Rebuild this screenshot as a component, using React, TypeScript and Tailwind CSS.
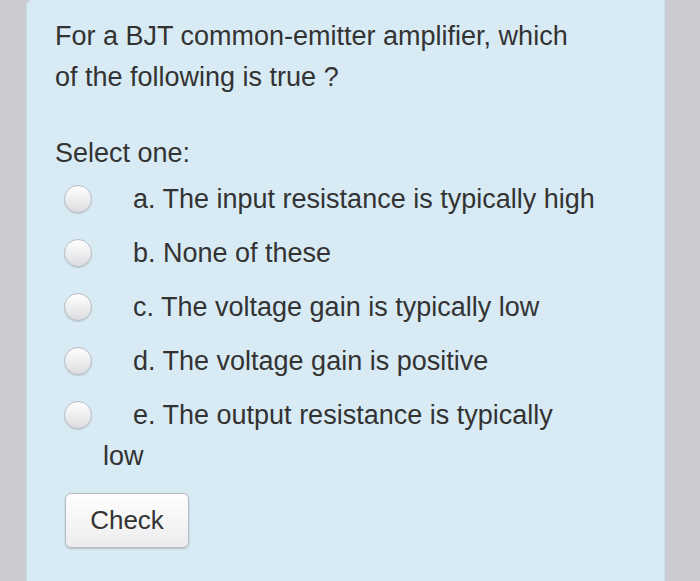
import React from 'react'

const options = [
  'a. The input resistance is typically high',
  'b. None of these',
  'c. The voltage gain is typically low',
  'd. The voltage gain is positive',
  'e. The output resistance is typically low',
]

const Radio = () => (
  <span className="ml-[-39px] mr-[41px] inline-block h-[28px] w-[28px] rounded-full border border-[#b9bcc2] bg-gradient-to-b from-[#ffffff] to-[#dcdde0] align-middle shadow-[0_1px_1px_rgba(0,0,0,0.15)] -translate-y-[2px]" />
)

export default function App() {
  return (
    <div
      className="h-[581px] w-[700px] overflow-hidden bg-[#cbccd1]"
      style={{ fontFamily: '"Liberation Sans", Arial, sans-serif' }}
    >
      <div className="ml-[26px] h-full w-[639px] rounded-tl-[6px] border-x border-[#c2dfee] bg-[#d8ebf5] pl-[28px] pt-[16px] text-[27px] leading-[41px] text-[#333333]">
        <div className="w-[535px]">
          For a BJT common-emitter amplifier, which of the following is true ?
        </div>
        <div className="mt-[35px]">Select one:</div>
        <div className="w-[542px]">
          {options.map((o) => (
            <div key={o} className="pb-[8px] pl-[48px] pt-[5px]">
              <Radio />
              {o}
            </div>
          ))}
        </div>
        <button className="ml-[10px] mt-[8px] h-[55px] w-[124px] rounded-[6px] border border-[#b8b9bd] bg-gradient-to-b from-[#ffffff] to-[#ececee] text-[26px] text-[#333333] shadow-[0_1px_2px_rgba(0,0,0,0.2)]">
          Check
        </button>
      </div>
    </div>
  )
}
